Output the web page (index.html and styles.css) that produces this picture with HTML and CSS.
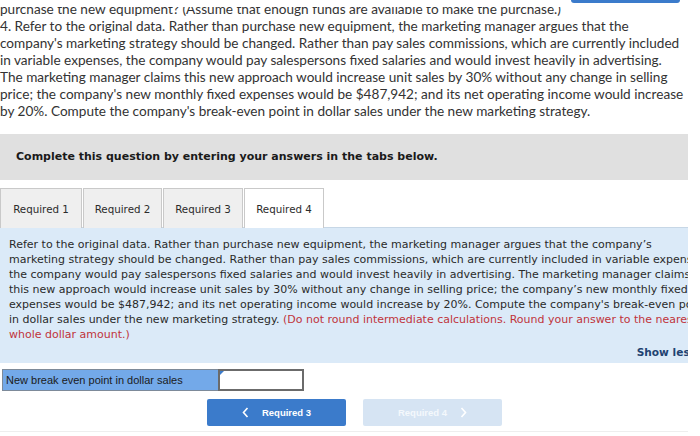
FILE: index.html
```html
<!DOCTYPE html>
<html lang="en">
<head>
<meta charset="utf-8">
<title>Required 4</title>
<link rel="stylesheet" href="styles.css">
</head>
<body>
<div class="page">
  <div class="topstrip"><div class="prev-sliver"></div></div>
  <div class="intro-clip">
    <p class="intro">purchase the new equipment? (Assume that enough funds are available to make the purchase.)<br>4. Refer to the original data. Rather than purchase new equipment, the marketing manager argues that the<br>company's marketing strategy should be changed. Rather than pay sales commissions, which are currently included<br>in variable expenses, the company would pay salespersons fixed salaries and would invest heavily in advertising.<br>The marketing manager claims this new approach would increase unit sales by 30% without any change in selling<br>price; the company's new monthly fixed expenses would be $487,942; and its net operating income would increase<br>by 20%. Compute the company's break-even point in dollar sales under the new marketing strategy.</p>
  </div>

  <div class="instructions">Complete this question by entering your answers in the tabs below.</div>

  <div class="tabs">
    <div class="tab">Required 1</div>
    <div class="tab">Required 2</div>
    <div class="tab">Required 3</div>
    <div class="tab active">Required 4</div>
  </div>

  <div class="panel">
    <div class="panel-inner">
      <p class="question">Refer to the original data. Rather than purchase new equipment, the marketing manager argues that the company’s<br>marketing strategy should be changed. Rather than pay sales commissions, which are currently included in variable expenses,<br>the company would pay salespersons fixed salaries and would invest heavily in advertising. The marketing manager claims<br>this new approach would increase unit sales by 30% without any change in selling price; the company’s new monthly fixed<br>expenses would be $487,942; and its net operating income would increase by 20%. Compute the company's break-even point<br>in dollar sales under the new marketing strategy. <span class="note">(Do not round intermediate calculations. Round your answer to the nearest</span><br><span class="note">whole dollar amount.)</span></p>
      <div class="showless">Show less</div>
    </div>
  </div>

  <div class="answer-row">
    <div class="answer-label">New break even point in dollar sales</div>
    <div class="answer-input"><span class="flag"></span></div>
  </div>

  <div class="nav">
    <button class="nav-btn prev" type="button">
      <svg class="chev" width="7" height="11" viewBox="0 0 7 11"><path d="M5.5 1 L1.5 5.5 L5.5 10" fill="none" stroke="#fff" stroke-width="1.6"/></svg>
      <span>Required 3</span>
    </button>
    <button class="nav-btn next" type="button" disabled>
      <span>Required 4</span>
      <svg class="chev" width="7" height="11" viewBox="0 0 7 11"><path d="M1.5 1 L5.5 5.5 L1.5 10" fill="none" stroke="#fff" stroke-width="1.6"/></svg>
    </button>
  </div>
  <div class="bottom-rule"></div>
</div>
</body>
</html>
```

FILE: styles.css
```css
* { box-sizing: border-box; }

html, body {
  margin: 0;
  padding: 0;
  background: #ffffff;
}

.page {
  width: 688px;
  overflow: hidden;
}

.topstrip {
  height: 7px;
  display: flex;
  justify-content: flex-end;
  padding-right: 8px;
}

.prev-sliver {
  width: 109px;
  height: 3px;
  background: #3b7bcb;
  border-radius: 0 0 3px 3px;
}

.intro-clip {
  overflow: hidden;
}

.intro {
  margin: -6px 0 0 0;
  font-family: "Lato", "Open Sans", sans-serif;
  font-size: 13.6px;
  line-height: 17px;
  color: #333333;
  white-space: nowrap;
}

.instructions {
  margin-top: 14px;
  height: 46px;
  background: #e0e0e0;
  padding-left: 16px;
  padding-bottom: 2px;
  display: flex;
  align-items: center;
  font-family: "DejaVu Sans", Verdana, sans-serif;
  font-weight: bold;
  font-size: 11px;
  color: #1a1a1a;
}

.tabs {
  margin-top: 8px;
  display: flex;
  height: 40px;
  position: relative;
  z-index: 1;
}

.tab {
  height: 40px;
  background: #efefef;
  border: 1px solid #c9c9c9;
  border-bottom: none;
  margin-right: 1px;
  display: flex;
  align-items: center;
  justify-content: center;
  font-family: "DejaVu Sans", Verdana, sans-serif;
  font-size: 10.3px;
  color: #2b2b2b;
}

.tab:nth-child(1) { width: 82px; }
.tab:nth-child(2) { width: 79px; }
.tab:nth-child(3) { width: 80px; }
.tab:nth-child(4) { width: 80px; }

.tab.active {
  background: #ffffff;
}

.panel {
  margin-top: -1px;
  background: #dbeaf8;
  border-top: 1px solid #c7d7e6;
  overflow: hidden;
}

.panel-inner {
  width: 710px;
  padding: 9px 9px 3px 9px;
}

.question {
  margin: 0;
  font-family: "DejaVu Sans", Verdana, sans-serif;
  font-size: 11px;
  line-height: 15px;
  color: #2a2a2a;
  white-space: nowrap;
}

.note {
  color: #c0343b;
}

.showless {
  margin-top: 3px;
  padding-right: 5px;
  text-align: right;
  font-family: "DejaVu Sans", Verdana, sans-serif;
  font-weight: bold;
  font-size: 10.6px;
  line-height: 15px;
  color: #1f4372;
}

.answer-row {
  margin-top: 6px;
  margin-left: 2px;
  display: flex;
  height: 22px;
}

.answer-label {
  width: 216px;
  height: 22px;
  background: #73a9e9;
  border: 1px solid #7d8a99;
  border-right: none;
  padding-left: 3px;
  display: flex;
  align-items: center;
  font-family: "Liberation Sans", Arial, sans-serif;
  font-size: 11px;
  color: #1b1b1b;
}

.answer-input {
  width: 86px;
  height: 22px;
  background: #ffffff;
  border: 2px solid #6b6b6b;
  position: relative;
}

.flag {
  position: absolute;
  left: 0;
  top: 0;
  width: 0;
  height: 0;
  border-top: 4px solid #3b7bcb;
  border-right: 4px solid transparent;
}

.nav {
  margin-top: 8px;
  margin-left: 207px;
  display: flex;
  gap: 17px;
}

.nav-btn {
  width: 139px;
  height: 27px;
  border: none;
  border-radius: 2px;
  display: flex;
  align-items: center;
  justify-content: center;
  gap: 13px;
  padding: 0;
  font-family: "Liberation Sans", Arial, sans-serif;
  font-weight: bold;
  font-size: 9.5px;
  color: #ffffff;
}

.nav-btn.prev {
  background: #3b7bcb;
}

.nav-btn.next {
  background: #d6e4f3;
  color: #f4f8fc;
}

.chev {
  display: block;
}

.bottom-rule {
  margin-top: 5px;
  height: 1px;
  background: #eeeeee;
}
```
